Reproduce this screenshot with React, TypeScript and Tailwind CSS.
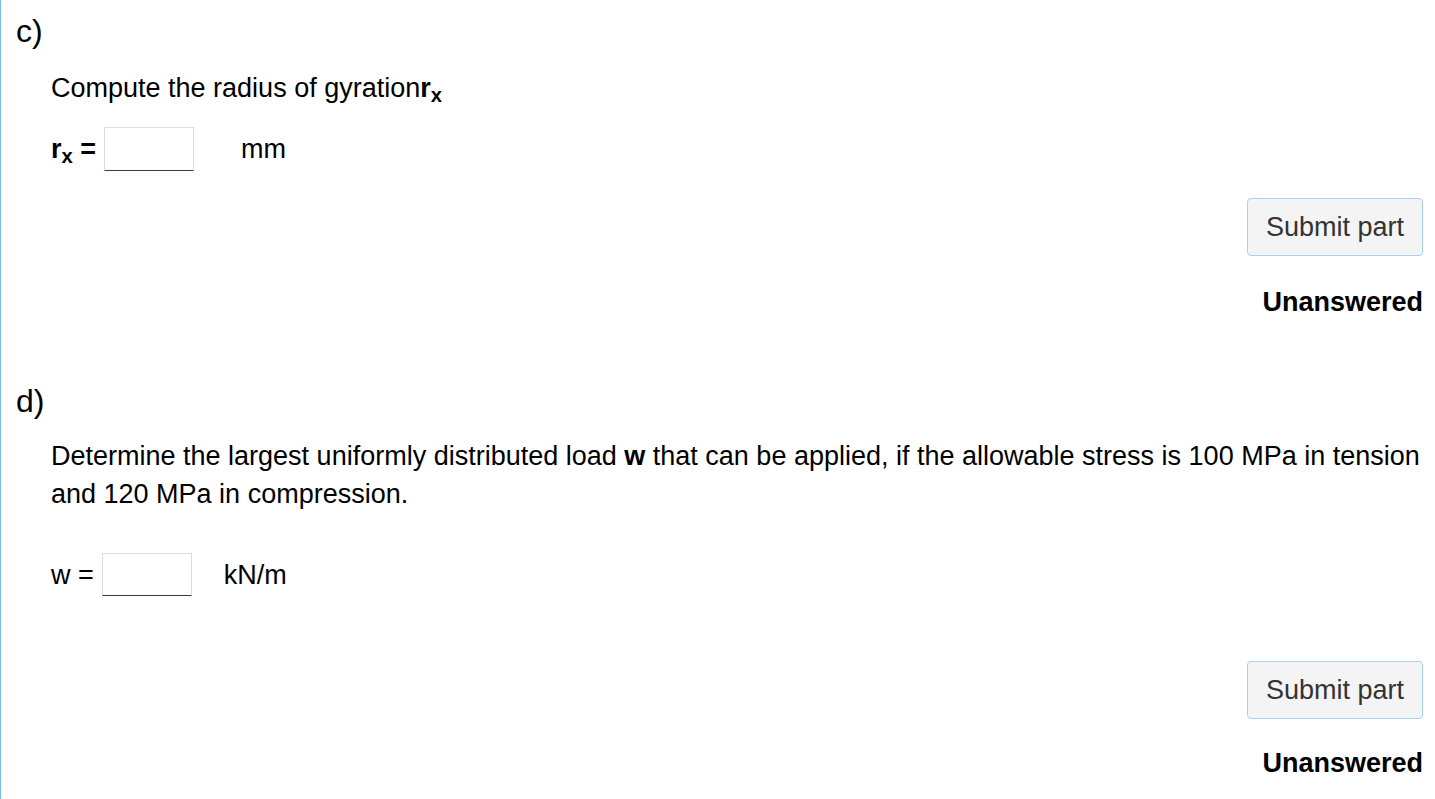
export default function App() {
  return (
    <div className="min-h-[799px] border-l border-[#74bfee] bg-white pl-[15px] pr-[12px] text-black font-['Liberation_Sans',Arial,sans-serif]">
      <div className="pt-[14px] text-[32px] leading-[35px]">c)</div>
      <div className="ml-[35px] mt-[20px] text-[27px] leading-[38px]">
        Compute the radius of gyration
        <b>
          r<sub>x</sub>
        </b>
      </div>
      <div className="ml-[35px] mt-[20px] flex h-[44px] items-center text-[27px] leading-[38px]">
        <span className="font-bold">
          r<sub>x</sub> =
        </span>
        <input
          type="text"
          className="ml-[8px] h-[44px] w-[90px] border border-[#dcdcdc] border-b-[#2d3e50] bg-white outline-none"
        />
        <span className="ml-[47px]">mm</span>
      </div>
      <div className="mt-[27px] flex justify-end">
        <button className="h-[58px] rounded-[4px] border border-[#a6d2f0] bg-[#f4f4f4] px-[18px] text-[27px] leading-[38px] text-[#333]">
          Submit part
        </button>
      </div>
      <div className="mt-[27px] text-right text-[27px] font-bold leading-[38px]">Unanswered</div>

      <div className="mt-[63px] text-[32px] leading-[35px]">d)</div>
      <p className="ml-[35px] mt-[18px] text-[27px] leading-[38px]">
        Determine the largest uniformly distributed load <b>w</b> that can be applied, if the allowable stress is 100 MPa in tension and 120 MPa in compression.
      </p>
      <div className="ml-[35px] mt-[40px] flex h-[43px] items-center text-[27px] leading-[38px]">
        <span>w =</span>
        <input
          type="text"
          className="ml-[8px] h-[43px] w-[90px] border border-[#dcdcdc] border-b-[#2d3e50] bg-white outline-none"
        />
        <span className="ml-[32px]">kN/m</span>
      </div>
      <div className="mt-[65px] flex justify-end">
        <button className="h-[58px] rounded-[4px] border border-[#a6d2f0] bg-[#f4f4f4] px-[18px] text-[27px] leading-[38px] text-[#333]">
          Submit part
        </button>
      </div>
      <div className="mt-[25px] text-right text-[27px] font-bold leading-[38px]">Unanswered</div>
    </div>
  );
}
